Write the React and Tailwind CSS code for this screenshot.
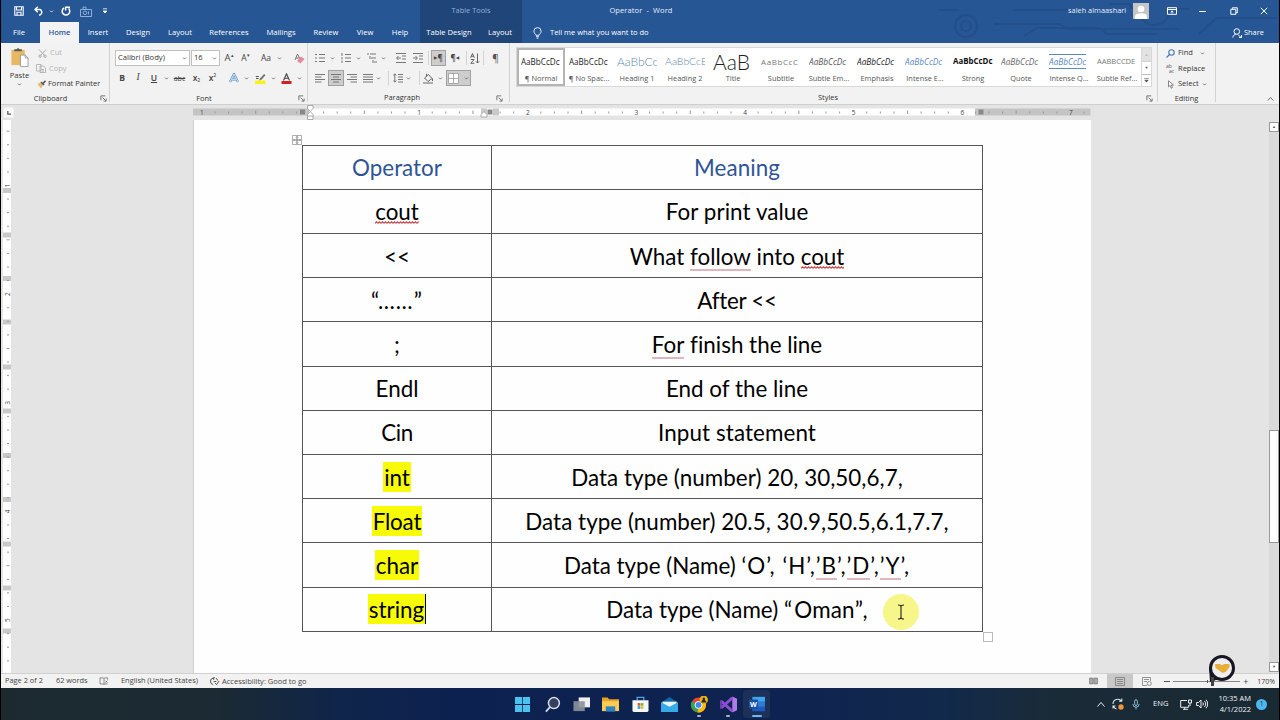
import React from "react";

function Caret({ className = "" }) {
  return (
    <svg viewBox="0 0 6 4" className={"h-[3px] w-[5px] shrink-0 " + className}>
      <path d="M1 .8 3 2.8 5 .8" fill="none" stroke="#555" strokeWidth="1" />
    </svg>
  );
}

function Divider({ className = "" }) {
  return <div className={"w-px shrink-0 bg-[#d2d2d2] " + className} />;
}

function Slot({ w, children, className = "" }) {
  return <div className={"flex shrink-0 items-center justify-center " + w + " " + className}>{children}</div>;
}

function Launcher() {
  return (
    <svg viewBox="0 0 8 8" className="size-[7px]" fill="none" stroke="#666" strokeWidth="1">
      <path d="M1 6V1h5M3 3l3.5 3.5M7 4v3H4" />
    </svg>
  );
}

function TitleBar() {
  return (
    <div className="flex h-[22px] items-center text-[#e6eefa]">
      <div className="flex w-[419px] items-center pl-[13px]">
        <svg viewBox="0 0 10 10" className="size-[10px]" fill="none" stroke="#fff" strokeWidth="1.1">
          <path d="M.8.8h8.4v8.4H.8zM2.500 1v3h5V1M3 9V6.200h4V9" />
        </svg>
        <svg viewBox="0 0 10 10" className="ml-[10px] size-[10px]" fill="none" stroke="#fff" strokeWidth="1.4">
          <path d="M3.800.8 1 3.500l2.800 2.700M1.200 3.500H6a3 3 0 0 1 0 5.500H5" />
        </svg>
        <Caret className="ml-[5px] [&_path]:stroke-white" />
        <svg viewBox="0 0 10 10" className="ml-[7px] size-[10px]" fill="none" stroke="#fff" strokeWidth="1.5">
          <path d="M3 2a3.800 3.800 0 1 0 4.500.4M4.600 4.600V1.200H9" />
        </svg>
        <svg viewBox="0 0 12 11" className="ml-[9px] h-[11px] w-[12px]" fill="none" stroke="#8faed8" strokeWidth="1">
          <path d="M.5 3.500h11v7H.5zM3 3.500V1.200h3v2.300" />
          <circle cx="5" cy="6.800" r="1.800" />
          <path d="M8.500 5.500v3" />
        </svg>
        <svg viewBox="0 0 6 6" className="ml-[10px] size-[6px]">
          <path d="M1 .8h4M1 3l2 2 2-2z" stroke="#fff" strokeWidth=".8" fill="#fff" />
        </svg>
      </div>
      <div className="flex h-full w-[102px] items-center justify-center bg-[#1f4579] text-[7.4px] text-[#93afd6]">Table Tools</div>
      <div className="w-[238px] text-center text-[7.5px] tracking-[0.1px]">Operator&nbsp; -&nbsp; Word</div>
      <div className="relative flex h-full flex-1 items-center">
        <svg viewBox="0 0 340 42" className="absolute top-0 right-0 h-[42px] w-[340px]" fill="none" stroke="#224f8a" strokeWidth="2">
          <circle cx="27" cy="26" r="11" />
          <circle cx="27" cy="26" r="5" />
          <path d="M0 10h20M55 24h65l10 5h110M85 36l13-8h62l8 6h50M170 4h20l14 16c6 7 18 7 24-2l6-9h16M260 34l18-16h60M75 10h90" />
        </svg>
        <div className="relative flex w-full items-center">
          <div className="ml-[308px] text-[7.4px]">saleh almaashari</div>
          <div className="ml-[7px] h-[16px] w-[16px] bg-[#c6c6c6]">
            <svg viewBox="0 0 16 16" className="size-[16px]" fill="#fff">
              <circle cx="8" cy="6" r="3.300" />
              <path d="M2 16v-2.500c0-2 2-3 4-3h4c2 0 4 1 4 3V16z" />
            </svg>
          </div>
          <svg viewBox="0 0 10 8" className="ml-[18px] h-[8px] w-[10px]" fill="none" stroke="#fff" strokeWidth="1">
            <path d="M.5.7h9v6.600h-9zM.5 2.500h9M5 6.500V4M3.600 5 5 3.800 6.400 5" />
          </svg>
          <div className="ml-[22px] h-px w-[7px] bg-white" />
          <svg viewBox="0 0 8 8" className="ml-[24px] size-[8px]" fill="none" stroke="#fff" strokeWidth="1">
            <path d="M.8 2.300h5v5h-5zM2.300 2V.8h5v5H6" />
          </svg>
          <svg viewBox="0 0 8 8" className="ml-[22px] size-[8px]" fill="none" stroke="#fff" strokeWidth="1">
            <path d="m.8.8 6.400 6.400M7.200.8.8 7.200" />
          </svg>
        </div>
      </div>
    </div>
  );
}

function Tab({ w, children, className = "text-white" }) {
  return <div className={"flex h-full shrink-0 items-center justify-center text-[7.6px] " + w + " " + className}>{children}</div>;
}

function TabRow() {
  return (
    <div className="flex h-[21px] items-center">
      <Tab w="w-[36px]">File</Tab>
      <div className="w-[3px]" />
      <Tab w="w-[39px]" className="bg-[#f3f3f3] font-semibold text-[#2b579a]">Home</Tab>
      <Tab w="w-[38px]">Insert</Tab>
      <Tab w="w-[42px]">Design</Tab>
      <Tab w="w-[42px]">Layout</Tab>
      <Tab w="w-[56px]">References</Tab>
      <Tab w="w-[48px]">Mailings</Tab>
      <Tab w="w-[42px]">Review</Tab>
      <Tab w="w-[36px]">View</Tab>
      <Tab w="w-[34px]">Help</Tab>
      <div className="w-[3px]" />
      <Tab w="w-[58px]" className="bg-[#1f4579] text-white">Table Design</Tab>
      <Tab w="w-[44px]" className="bg-[#1f4579] text-white">Layout</Tab>
      <svg viewBox="0 0 10 13" className="ml-[11px] h-[12px] w-[9px]" fill="none" stroke="#fff" strokeWidth="1">
        <path d="M3.200 9C3 7.500 1 6.800 1 4.500a4 4 0 0 1 8 0C9 6.800 7 7.500 6.800 9zM3.400 10.600h3.200M4 12.200h2" />
      </svg>
      <div className="ml-[8px] w-[101px] text-[7.5px] font-medium text-white">Tell me what you want to do</div>
      <svg viewBox="0 0 10 10" className="ml-[581px] size-[10px]" fill="none" stroke="#fff" strokeWidth="1">
        <circle cx="4.800" cy="3.500" r="2.800" />
        <path d="M.8 9.500c.3-2 1.500-3 3-3.200M6 6.500l3 3M9.500 7v2.500H7" />
      </svg>
      <div className="ml-[2px] text-[7.4px] text-white">Share</div>
    </div>
  );
}

function GroupLabel({ children, launcher = true }) {
  return (
    <div className="mt-px flex h-[12px] w-full items-center text-[7.4px] text-[#333]">
      <div className="flex-1 text-center">{children}</div>
      <div className={launcher ? "w-[9px]" : "w-0"}>{launcher && <Launcher />}</div>
    </div>
  );
}

function Clipboard() {
  return (
    <div className="flex w-[108px] flex-col">
      <div className="flex h-[50px]">
        <div className="flex w-[37px] flex-col items-center pt-[4px]">
          <svg viewBox="0 0 19 21" className="h-[20px] w-[19px]">
            <path d="M1 3h14v16H1z" fill="#e8b964" />
            <path d="M4 4.500V2.300h2.500a1.600 1.600 0 0 1 3 0H12v2.200z" fill="#5a5a5a" />
            <path d="M10.500 8.500h5l3 3v9h-8z" fill="#fff" stroke="#8a8a8a" strokeWidth=".8" />
            <path d="M15.500 8.500v3h3" fill="none" stroke="#8a8a8a" strokeWidth=".8" />
          </svg>
          <div className="mt-[3px] text-[7.600px] leading-[10px] text-[#333]">Paste</div>
          <Caret className="mt-[3px]" />
        </div>
        <div className="flex flex-col pt-[2px] text-[7.500px] leading-none text-[#b5b5b5]">
          <div className="flex h-[16px] items-center gap-[3px]">
            <svg viewBox="0 0 9 9" className="size-[9px]" fill="none" stroke="#aaa" strokeWidth="1">
              <path d="M1 .5 6.300 6.200M8 .5 2.700 6.200" />
              <circle cx="2" cy="7.200" r="1.200" />
              <circle cx="7" cy="7.200" r="1.200" />
            </svg>
            Cut
          </div>
          <div className="-ml-[2px] flex h-[15px] items-center gap-[3px]">
            <svg viewBox="0 0 10 9" className="h-[9px] w-[10px]" fill="#f3f3f3" stroke="#b0b0b0" strokeWidth=".9">
              <path d="M.5.5h4.500v6.500H.5zM4 2h3.500l2 2v4.500H4zM5.500 5.500H8M5.500 7H8" />
            </svg>
            Copy
          </div>
          <div className="-ml-px flex h-[16px] items-center gap-[2px] text-[#333]">
            <svg viewBox="0 0 9 9" className="size-[9px]">
              <path d="m.5 4 3-1.500 2.500 2.500L4 8.500z" fill="#e8b964" />
              <path d="m4 2 3 3M6 3.500 8.500.8" stroke="#555" strokeWidth="1.600" />
            </svg>
            Format Painter
          </div>
        </div>
      </div>
      <GroupLabel>Clipboard</GroupLabel>
    </div>
  );
}

function FontGroup() {
  return (
    <div className="flex w-[197px] flex-col">
      <div className="flex h-[50px] flex-col pt-[6px] text-[#444]">
        <div className="flex h-[18px] items-center pl-[5px]">
          <div className="flex h-[16px] w-[75px] items-center justify-between border border-[#c0c0c0] bg-white pr-[2px] pl-[2px] text-[7.600px] text-[#333]">
            Calibri (Body)
            <Caret />
          </div>
          <div className="ml-[1px] flex h-[16px] w-[29px] items-center justify-between border border-[#c0c0c0] bg-white pr-[2px] pl-[2px] text-[7.600px] text-[#333]">
            16
            <Caret />
          </div>
          <Slot w="w-[18px]" className="text-[9.500px]">A<span className="mb-[6px] text-[5px]">▴</span></Slot>
          <Slot w="w-[15px]" className="text-[8.500px]">A<span className="mb-[6px] text-[5px]">▾</span></Slot>
          <Slot w="w-[22px]" className="pl-[4px] text-[8.500px]">Aa</Slot>
          <Caret className="ml-[2px]" />
          <svg viewBox="0 0 11 11" className="ml-[12px] size-[11px]">
            <path d="M1 7 3.500 1 6 6M2 5h3" stroke="#777" fill="none" />
            <path d="m3 8 4-4.500 3.500 2.500-4 4.500z" fill="#e58a9c" />
          </svg>
        </div>
        <div className="mt-[2px] flex h-[18px] items-center pl-[4px] text-[8.500px]">
          <Slot w="w-[16px]" className="font-bold">B</Slot>
          <Slot w="w-[16px]" className="font-['Liberation_Serif'] text-[9.500px] italic">I</Slot>
          <Slot w="w-[16px]" className="font-semibold underline">U</Slot>
          <Slot w="w-[8px]"><Caret /></Slot>
          <Slot w="w-[19px]" className="text-[7px] line-through">abc</Slot>
          <Slot w="w-[15px]" className="font-semibold">x<span className="mt-[5px] text-[4.500px]">2</span></Slot>
          <Slot w="w-[17px]" className="font-semibold">x<span className="mb-[5px] text-[4.500px]">2</span></Slot>
          <Slot w="w-[25px]">
            <svg viewBox="0 0 10 10" className="size-[10px]" fill="none">
              <path d="M1 9 5 1l4 8M2.800 6.300h4.400" stroke="#5b8fca" strokeWidth="2.200" />
              <path d="M1 9 5 1l4 8M2.800 6.300h4.400" stroke="#e8f0fa" strokeWidth=".9" />
            </svg>
          </Slot>
          <Caret className="-ml-[2px]" />
          <Slot w="w-[23px]">
            <svg viewBox="0 0 11 11" className="size-[11px]">
              <path d="M0 7.500h10.500v3.500H0z" fill="#f8f41a" />
              <path d="m4 7.500 1-2L9 1l1.500 1.300-4 4.500z" fill="#777" />
              <path d="M.8 3.500h3M1 5.500h2.500" stroke="#555" />
            </svg>
          </Slot>
          <Caret className="-ml-px" />
          <Slot w="w-[21px]">
            <svg viewBox="0 0 11 11" className="size-[11px]">
              <path d="M2.500 7.500 5.500.8l3 6.700M3.500 5.300h4" stroke="#444" strokeWidth="1.100" fill="none" />
              <path d="M.5 8h10v3H.5z" fill="#d32020" />
            </svg>
          </Slot>
          <Caret />
        </div>
      </div>
      <GroupLabel>Font</GroupLabel>
    </div>
  );
}

function Lines({ d, className = "" }) {
  return (
    <svg viewBox="0 0 10 10" className={"size-[10px] shrink-0 " + className} fill="none" stroke="#777" strokeWidth="1">
      <path d={d} />
    </svg>
  );
}

function ParagraphGroup() {
  return (
    <div className="flex w-[201px] flex-col">
      <div className="flex h-[50px] flex-col pt-[6px]">
        <div className="flex h-[18px] items-center pl-[7px]">
          <Lines d="M0 1.500h2M0 5h2M0 8.500h2M4 1.500h6M4 5h6M4 8.500h6" />
          <Caret className="ml-[5px]" />
          <Lines className="ml-[6px]" d="M1 0v3M1 4v2.500M1 7.500v2.500M4 1.500h6M4 5h6M4 8.500h6" />
          <Caret className="ml-[5px]" />
          <Lines className="ml-[6px]" d="M0 1h2M3 1h6M3 3v3M4 5h5M6 7v3M7 9h3" />
          <Caret className="ml-[4px]" />
          <Lines className="ml-[10px]" d="M0 .5h10M6 3h4M6 6h4M0 9.500h10M5 5H.8M2.500 3 .6 5l1.900 2" />
          <Lines className="ml-[7px]" d="M0 .5h10M6 3h4M6 6h4M0 9.500h10M0 5h4.200M2.500 3l1.900 2-1.900 2" />
          <Divider className="ml-[5px] h-[14px]" />
          <div className="ml-[2px] flex h-[16px] w-[15px] items-center justify-center border border-[#a0a0a0] bg-[#cdcdcd] text-[8px] leading-none font-semibold text-[#444]">
            <span className="text-[4px]">▶</span>¶
          </div>
          <Slot w="w-[17px]" className="text-[8px] font-semibold text-[#444]">¶<span className="text-[4px]">◀</span></Slot>
          <Divider className="ml-[3px] h-[14px]" />
          <Slot w="w-[16px]">
            <svg viewBox="0 0 10 11" className="h-[11px] w-[10px]" fill="none" stroke="#555" strokeWidth=".9">
              <path d="M.6 4.800 2.500.5l1.900 4.300M1.200 3.300h2.600M.8 6.500h3.300L.8 10.300h3.500M7.500.5v9.500M5.800 8.300 7.500 10l1.700-1.700" />
            </svg>
          </Slot>
          <Divider className="h-[14px]" />
          <Slot w="w-[23px]" className="text-[10px] text-[#555]">¶</Slot>
        </div>
        <div className="mt-[2px] flex h-[18px] items-center pl-[7px]">
          <Lines d="M0 1.500h10M0 4h6.500M0 6.500h10M0 9h6.500" />
          <div className="ml-[3px] flex h-[16px] w-[16px] items-center justify-center border border-[#a0a0a0] bg-[#cdcdcd]">
            <Lines d="M0 1.500h10M2 4h6M0 6.500h10M2 9h6" />
          </div>
          <Lines className="ml-[3px]" d="M0 1.500h10M3.500 4H10M0 6.500h10M3.500 9H10" />
          <Lines className="ml-[6px]" d="M0 1.500h10M0 4h10M0 6.500h10M0 9h10" />
          <Caret className="ml-[3px]" />
          <Divider className="ml-[7px] h-[14px]" />
          <Lines className="ml-[4px]" d="M1.800 1v8M.3 2.500 1.800.8l1.500 1.700M.3 7.500l1.500 1.700 1.500-1.700M5 1.500h5M5 4h5M5 6.500h5M5 9h5" />
          <Caret className="ml-[3px]" />
          <Divider className="ml-[8px] h-[14px]" />
          <svg viewBox="0 0 11 11" className="ml-[3px] size-[11px]" fill="none" stroke="#666" strokeWidth="1">
            <path d="m1.500 5 4-3.500 3.500 4-4 3-3.500-3.500zM3.500 3.500V.8M9.500 5.500v2.500M0 10h10" />
          </svg>
          <Caret className="ml-[4px]" />
          <div className="ml-[3px] flex h-[16px] w-[25px] items-center gap-[5px] border border-[#a0a0a0] bg-[#cdcdcd] pl-[1px]">
            <svg viewBox="0 0 11 11" className="size-[11px]" fill="#fff" stroke="#999" strokeWidth=".8">
              <path d="M.5.5h10v10H.5zM5.500.5v10M.5 5.500h10" />
            </svg>
            <Caret />
          </div>
        </div>
      </div>
      <div className="pr-[4px]">
        <GroupLabel>Paragraph</GroupLabel>
      </div>
    </div>
  );
}

const STYLES = [
  ["AaBbCcDc", "¶ Normal", "text-[8.100px] text-[#222]", "outline outline-2 -outline-offset-2 outline-[#b4b4b4]"],
  ["AaBbCcDc", "¶ No Spac...", "text-[8.100px] text-[#222]", ""],
  ["AaBbCc", "Heading 1", "text-[12px] text-[#6488a8] font-['Lato'] font-light", ""],
  ["AaBbCcE", "Heading 2", "text-[10.500px] text-[#6488a8] font-['Lato'] font-light", ""],
  ["AaB", "Title", "text-[21px] text-[#222] font-['Lato'] font-light", ""],
  ["AaBbCcC", "Subtitle", "text-[8px] text-[#777] tracking-[0.600px]", ""],
  ["AaBbCcDc", "Subtle Em...", "text-[8.300px] text-[#555] italic", ""],
  ["AaBbCcDc", "Emphasis", "text-[8.300px] text-[#222] italic", ""],
  ["AaBbCcDc", "Intense E...", "text-[8.300px] text-[#5b8ac0] italic", ""],
  ["AaBbCcDc", "Strong", "text-[7.900px] text-[#111] font-bold", ""],
  ["AaBbCcDc", "Quote", "text-[8.300px] text-[#666] italic", ""],
  ["AaBbCcDc", "Intense Q...", "text-[8.300px] text-[#5b8ac0] italic border-y border-[#5b8ac0]", ""],
  ["AABBCCDE", "Subtle Ref...", "text-[7.500px] text-[#777]", ""],
];

function StylesGroup() {
  return (
    <div className="flex w-[647px] flex-col">
      <div className="flex h-[50px] pt-[4px] pl-[6px]">
        <div className="flex h-[40px] w-[636px] border border-[#d8d8d8] bg-white">
          {STYLES.map(([sample, name, cls, box], i) => (
            <div key={i} className={"flex h-[38px] w-[48px] shrink-0 flex-col items-center " + box}>
              <div className="flex h-[25px] w-[40px] items-center justify-start overflow-hidden pt-[2px]">
                <span className={"leading-[13px] whitespace-nowrap " + cls}>{sample}</span>
              </div>
              <div className="text-[7.400px] leading-[11px] whitespace-nowrap text-[#555]">{name}</div>
            </div>
          ))}
          <div className="flex flex-1 flex-col border-l border-[#d8d8d8]">
            <div className="flex h-[13px] items-center justify-center bg-[#e2e2e2] text-[4px] text-[#bbb]">▲</div>
            <div className="flex h-[13px] items-center justify-center border-t border-[#d0d0d0] text-[4px] text-[#555]">▼</div>
            <div className="flex flex-1 items-center justify-center border-t border-[#c0c0c0]">
              <svg viewBox="0 0 6 6" className="size-[5px]"><path d="M0 .5h6M1 2.500h4L3 5z" stroke="#555" fill="#555" strokeWidth=".7" /></svg>
            </div>
          </div>
        </div>
      </div>
      <div className="pr-[2px]">
        <GroupLabel>Styles</GroupLabel>
      </div>
    </div>
  );
}

function EditingGroup() {
  return (
    <div className="flex w-[57px] flex-col">
      <div className="flex h-[50px] flex-col pt-[2px] pl-[8px] text-[7.500px] leading-none text-[#333]">
        <div className="flex h-[16px] items-center">
          <svg viewBox="0 0 9 9" className="size-[9px]" fill="none" stroke="#4a7ab5" strokeWidth="1.100">
            <circle cx="5.500" cy="3.500" r="2.700" />
            <path d="M3.500 5.500.6 8.500" />
          </svg>
          <span className="ml-[3px]">Find</span>
          <Caret className="ml-[7px]" />
        </div>
        <div className="flex h-[15px] items-center">
          <div className="flex w-[10px] flex-col text-[5px] leading-[4.500px] text-[#555]">
            <span>ab</span>
            <span className="pl-[3px]">ac</span>
          </div>
          <span className="ml-[2px]">Replace</span>
        </div>
        <div className="flex h-[16px] items-center">
          <svg viewBox="0 0 9 9" className="size-[9px]" fill="#fff" stroke="#777" strokeWidth=".9">
            <path d="M2.500.8v6l1.600-1.400 1.200 2.800 1.200-.6-1.200-2.600h2.200z" />
          </svg>
          <span className="ml-[3px]">Select</span>
          <Caret className="ml-[3px]" />
        </div>
      </div>
      <GroupLabel launcher={false}>Editing</GroupLabel>
    </div>
  );
}

function Ribbon() {
  return (
    <div className="flex h-[62px] border-b border-[#cfcfcf] bg-[#f2f2f2]">
      <Clipboard />
      <Divider className="h-[59px]" />
      <FontGroup />
      <Divider className="h-[59px]" />
      <ParagraphGroup />
      <Divider className="h-[59px]" />
      <StylesGroup />
      <Divider className="h-[59px]" />
      <EditingGroup />
      <Divider className="h-[59px]" />
      <div className="flex flex-1 items-end justify-end pr-[5px] pb-[3px]">
        <svg viewBox="0 0 8 5" className="h-[4px] w-[7px]" fill="none" stroke="#555"><path d="m.5 4.500 3.500-4 3.500 4" /></svg>
      </div>
    </div>
  );
}

const STEP = 13.58;

function HorizontalRuler() {
  const ticks = [];
  for (let i = -8; i < 58; i++) {
    if (i % 8 === 0) continue;
    ticks.push(<path key={i} d={`M${117 + i * STEP} ${i % 4 === 0 ? 5.500 : 6.500}v${i % 4 === 0 ? 3.500 : 2}`} stroke="#999" strokeWidth="1" />);
  }
  return (
    <svg viewBox="0 0 898 15" className="ml-[192px] h-[15px] w-[898px]">
      <path d="M0 3.500h116v7H0zM782 3.500h115.500v7H782z" fill="#c4c4c4" />
      <path d="M116 3.500h666v7H116z" fill="#fff" />
      {ticks}
      <path d="M300 3.500h6v7h-6zM288 3.500h6v7h-6z" fill="#c9c9c9" />
      <path d="M107 4.500h5v5h-5zM294.500 4.500h5v5h-5zM785.500 4.500h5v5h-5z" fill="#888" />
      {[1, 0, 1, 2, 3, 4, 5, 6, 7].map((n, i) =>
        n ? (
          <text key={i} x={117.500 + (i - 1) * STEP * 8} y="9.500" fontSize="6.500" textAnchor="middle" fill="#444">{n}</text>
        ) : null
      )}
      <path d="M114.500.5h5.500v3l-2.700 3-2.800-3zM117.300 6.500l2.700 3v5h-5.500v-5zM114.500 11h5.500M288 11v-1.500l3-3 3 3v2.500h-6z" fill="#fff" stroke="#999" strokeWidth=".8" />
    </svg>
  );
}

const ROW_MARKS = [70.5, 115, 158.5, 202, 247, 291, 335.5, 379.5, 424, 468, 511];

function VerticalRuler() {
  const ticks = [];
  for (let i = -7; i < 36; i++) {
    if (i % 8 === 0) continue;
    const y = 65.500 + i * STEP;
    if (y < 4) continue;
    ticks.push(<path key={i} d={`M${i % 4 === 0 ? 3.500 : 4} ${y}h${i % 4 === 0 ? 3 : 2}`} stroke="#999" strokeWidth="1" />);
  }
  return (
    <svg viewBox="0 0 8 553" className="ml-[2px] h-[553px] w-[8px] shrink-0 bg-white">
      {ROW_MARKS.map((y) => (
        <path key={y} d={`M0 ${y - 2.500}h8v5h-8z`} fill="#c8c8c8" />
      ))}
      {ticks}
      {[1, 2, 3, 4, 5].map((n, i) => (
        <text key={n} fontSize="6.500" textAnchor="middle" fill="#444" transform={`translate(7 ${65.500 + i * STEP * 8}) rotate(-90)`}>{n}</text>
      ))}
    </svg>
  );
}

function Spelling({ children }) {
  return (
    <span className="relative inline-block">
      {children}
      <svg className="absolute top-[24px] left-0 h-[3px] w-full overflow-hidden">
        <defs>
          <pattern id="wave" width="3" height="3" patternUnits="userSpaceOnUse">
            <path d="M0 2.200 1.500.8 3 2.200" fill="none" stroke="#c93a3f" strokeWidth="1.200" />
          </pattern>
        </defs>
        <rect width="100%" height="3" fill="url(#wave)" />
      </svg>
    </span>
  );
}

function Grammar({ children }) {
  return (
    <span className="relative inline-block">
      {children}
      <span className="absolute top-[27px] left-0 h-[2px] w-full bg-[#e0b6be]" />
    </span>
  );
}

function Mark({ children, caret = false }) {
  return (
    <span className={"mb-[2px] inline-block h-[30px] bg-[#f7fb08] px-[1px] leading-[32px]" + (caret ? " border-r border-black" : "")}>{children}</span>
  );
}

const ROWS = [
  ["Operator", "Meaning", "", "tracking-[0.100px]"],
  [<Spelling>cout</Spelling>, "For print value", "", "tracking-[0.080px]"],
  ["<<", <>What <Grammar>follow</Grammar> into <Spelling>cout</Spelling></>, "", ""],
  ["“……”", <>After &lt;&lt;</>, "tracking-[1.100px]", "tracking-[-0.300px]"],
  [";", <><Grammar>For</Grammar> finish the line</>, "", ""],
  ["Endl", "End of the line", "", ""],
  ["Cin", "Input statement", "tracking-[-0.400px]", "tracking-[0.100px]"],
  [<Mark>int</Mark>, "Data type (number) 20, 30,50,6,7,", "", "tracking-[0.040px]"],
  [<Mark>Float</Mark>, "Data type (number) 20.5, 30.9,50.5,6.1,7.7,", "tracking-[-0.200px]", "tracking-[0.040px]"],
  [<Mark>char</Mark>, <>Data type (Name) <span className="tracking-[1px]">‘O’, ‘H’,<Grammar>’B</Grammar>’,<Grammar>’D</Grammar>’,<Grammar>’Y</Grammar>’,</span></>, "", ""],
  [<Mark caret>string</Mark>, <>Data type (Name) <span className="tracking-[2.200px]">“</span><span className="tracking-[0.200px]">Oman</span><span className="tracking-[2px]">”,</span></>, "", "pl-[2px]"],
];

function OperatorTable() {
  return (
    <div className="relative w-[681px] border-t border-l border-[#555] font-['Lato','Carlito',sans-serif] text-[22.400px] leading-[30px] font-normal text-black [font-variant-ligatures:none]">
      <svg viewBox="0 0 10 10" className="absolute -top-[11px] -left-[11px] size-[10px]" fill="#fff" stroke="#666" strokeWidth=".8">
        <path d="M.5.5h9v9h-9z" stroke="#999" />
        <path d="M5 1.500v7M1.500 5h7M4 2.500l1-1 1 1M4 7.500l1 1 1-1M2.500 4l-1 1 1 1M7.500 4l1 1-1 1" fill="none" />
      </svg>
      {ROWS.map(([a, b, ca, cb], i) => (
        <div key={i} className={"flex h-[44.200px] border-b border-[#555]" + (i === 0 ? " text-[#2f5496]" : "")}>
          <div className={"flex w-[189px] items-center justify-center border-r border-[#555] pt-[2px] " + ca}>{a}</div>
          <div className="flex w-[491px] items-center justify-center border-r border-[#555] pt-[2px] whitespace-pre">
            <div className={cb}>{b}</div>
          </div>
        </div>
      ))}
      <div className="absolute -right-[10px] -bottom-[10px] size-[10px] border border-[#bbb] bg-white" />
      <div className="absolute right-[64px] bottom-[2px] flex size-[36px] items-center justify-center rounded-full bg-[#f7f68a]">
        <svg viewBox="0 0 8 16" className="h-[16px] w-[8px]" fill="none" stroke="#222" strokeWidth="1.100">
          <path d="M1 1c2 0 3 .3 3 1.500V13.500C4 14.700 3 15 1 15M7 1c-2 0-3 .3-3 1.500M4 13.500C4 14.700 5 15 7 15" />
        </svg>
      </div>
    </div>
  );
}

function Document() {
  return (
    <div className="flex h-[568px] flex-col bg-[#e4e4e4]">
      <div className="flex h-[15px] items-start">
        <div className="relative w-0">
          <div className="absolute top-[2px] left-[2px] flex size-[11px] items-center justify-center border border-[#eee] bg-[#fafafa]">
            <svg viewBox="0 0 5 5" className="size-[4px]" fill="none" stroke="#555" strokeWidth="1.500"><path d="M1 0v4h4" /></svg>
          </div>
        </div>
        <HorizontalRuler />
      </div>
      <div className="flex h-[553px]">
        <VerticalRuler />
        <div className="ml-[182px] h-[553px] w-[898px] border-l border-[#d0d0d0] bg-[#fefefe] pt-[24.700px] pl-[108px]">
          <OperatorTable />
        </div>
        <div className="flex-1" />
        <div className="flex w-[10px] flex-col pt-[2px]">
          <div className="flex h-[10px] items-center justify-center border border-[#999] bg-white text-[4px] text-[#555]">▲</div>
          <div className="h-[298px] bg-[#d9d9d9]" />
          <div className="h-[113px] border border-[#999] bg-white" />
          <div className="h-[119px] bg-[#d9d9d9]" />
          <div className="flex h-[10px] items-center justify-center border border-[#999] bg-white text-[4px] text-[#555]">▼</div>
        </div>
      </div>
    </div>
  );
}

function StatusBar() {
  return (
    <div className="flex h-[15px] items-center border-t border-[#d0d0d0] bg-[#f2f2f2] text-[7.400px] text-[#444]">
      <div className="ml-[4px] w-[51px]">Page 2 of 2</div>
      <div className="w-[43px]">62 words</div>
      <svg viewBox="0 0 10 9" className="h-[8px] w-[10px]" fill="none" stroke="#666" strokeWidth=".8">
        <path d="M.5 1h3.500l1 .8V8.500L4 7.800H.5zM5 1.800 6 1h3v2M5 8.500l1-.7h3M6.500 4l2.500 2.500M9 4 6.500 6.500" />
      </svg>
      <div className="ml-[12px] w-[88px] whitespace-nowrap">English (United States)</div>
      <svg viewBox="0 0 11 10" className="h-[9px] w-[11px]" fill="none" stroke="#444" strokeWidth="1">
        <path d="M4.500 1A3.800 3.800 0 0 0 4 8.500M6 .8l-2 .4.800 2M6 6.500l1.800 2L10.500 4.500M7 1.500a3 3 0 0 1 2 2.500M4.500 5h3" />
      </svg>
      <div className="ml-[2px] pt-px text-[7.500px]">Accessibility: Good to go</div>
      <div className="flex-1" />
      <svg viewBox="0 0 10 8" className="h-[8px] w-[9px]" fill="#aaa" stroke="#777" strokeWidth=".8">
        <path d="M.5.8h4v6.400h-4zM5.500.8h4v6.400h-4z" />
      </svg>
      <div className="ml-[9px] flex h-[14px] w-[26px] items-center justify-center bg-[#c8c8c8]">
        <svg viewBox="0 0 10 9" className="h-[9px] w-[10px]" fill="none" stroke="#777" strokeWidth=".8">
          <path d="M.5.5h9v8h-9zM2 2.500h6M2 4.500h6M2 6.500h6" />
        </svg>
      </div>
      <svg viewBox="0 0 10 9" className="ml-[9px] h-[9px] w-[10px]" fill="none" stroke="#888" strokeWidth=".9">
        <path d="M5 8.500H.5v-8h8V4M2 2.500h5M2 4.500h3" />
        <circle cx="7.300" cy="6.500" r="2" />
      </svg>
      <div className="ml-[12px] h-px w-[6px] bg-[#555]" />
      <div className="relative ml-[3px] flex h-[14px] w-[67px] items-center">
        <div className="h-px w-full bg-[#888]" />
        <div className="absolute top-[6px] left-[34px] h-[3px] w-px bg-[#555]" />
        <svg viewBox="0 0 28 30" className="absolute -top-[20px] left-[35px] h-[30px] w-[28px]">
          <path d="M1 13h5v11h8v2H7.500l-3 2H2z" fill="#171722" />
          <circle cx="14" cy="14" r="13" fill="#171722" />
          <circle cx="14" cy="14" r="10" fill="#eeeef2" />
          <path d="M7 10h4.500l2.500 1.200 2.200-1.200h5.300v3l-3 4c-1.500 2-4.500 2.300-6 .5L7.500 14z" fill="#e9ae35" />
        </svg>
        <div className="absolute top-[3px] left-[38px] h-[9px] w-[3px] bg-[#444]" />
      </div>
      <div className="ml-[3px] w-[10px] text-[9px] leading-none">+</div>
      <div className="ml-[4px] mr-[4px] text-[7px]">170%</div>
    </div>
  );
}

function TaskIcon({ children, dot = false }) {
  return (
    <div className="relative flex h-full w-[29.400px] items-center justify-center">
      <svg viewBox="0 0 18 18" className="size-[17px]">{children}</svg>
      {dot && <div className="absolute bottom-[3px] h-[2px] w-[4px] rounded-full bg-[#a9b5c6]" />}
    </div>
  );
}

function Taskbar() {
  return (
    <div className="flex h-[32px] items-center bg-[linear-gradient(90deg,#1c2a30_0%,#1b2a33_17%,#0f2549_26%,#0d2150_35%,#0f2350_62%,#11294a_74%,#1a2b38_82%,#1a2a33_100%)]">
      <div className="w-[507px]" />
      <TaskIcon>
        <path d="M1 1h7.600v7.600H1zM9.400 1H17v7.600H9.400zM1 9.400h7.600V17H1zM9.400 9.400H17V17H9.400z" fill="#4cc2f1" />
      </TaskIcon>
      <TaskIcon>
        <circle cx="10.500" cy="7.500" r="5.800" fill="#33415f" stroke="#d5dce8" strokeWidth="1.600" />
        <path d="m6.500 11.500-4.500 5" stroke="#d5dce8" strokeWidth="1.800" />
      </TaskIcon>
      <TaskIcon>
        <path d="M6 1.500h12v10.500H6z" fill="#f0f0f0" />
        <path d="M.5 5.500h12V16H.5z" fill="#8d929b" opacity=".9" />
      </TaskIcon>
      <TaskIcon>
        <path d="M0 1.500h6l1.500 2H18V16H0z" fill="#e8a325" />
        <path d="M0 5.500h18V16H0z" fill="#fbcb53" />
        <path d="M4 11h10v5.500H4z" fill="#2c83c4" />
      </TaskIcon>
      <TaskIcon>
        <path d="M5.500 4.500V1.500h7v3" fill="none" stroke="#4ba3dd" strokeWidth="1.400" />
        <path d="M.5 4.500h17V15a2 2 0 0 1-2 2h-13a2 2 0 0 1-2-2z" fill="#f4f6f8" />
        <path d="M6 7.500h2.800v2.800H6z" fill="#e0532c" />
        <path d="M9.300 7.500h2.800v2.800H9.300z" fill="#7db530" />
        <path d="M6 10.800h2.800v2.800H6z" fill="#2f9be0" />
        <path d="M9.300 10.800h2.800v2.800H9.300z" fill="#f4b62a" />
      </TaskIcon>
      <TaskIcon>
        <path d="M0 7 9 1l9 6v10H0z" fill="#1465a8" />
        <path d="M1.500 6h15v7h-15z" fill="#e9f4fc" />
        <path d="M0 6.500l9 5 9-5V17H0z" fill="#36a9e8" />
      </TaskIcon>
      <TaskIcon dot>
        <circle cx="8" cy="9.500" r="8" fill="#e94335" />
        <path d="M8 9.500 1 5.500A8 8 0 0 0 7 17.400z" fill="#34a353" />
        <path d="M8 9.500 7 17.500A8 8 0 0 0 15.500 7z" fill="#fbbc05" />
        <circle cx="8" cy="9.500" r="3.700" fill="#4285f4" stroke="#fff" strokeWidth="1" />
        <circle cx="13.500" cy="4" r="4.500" fill="#e3b21d" />
        <path d="M11 7V5.500l1.300-1V2.800a1.200 1.200 0 0 1 2.500 0v1.700l1.200 1V7z" fill="#33251a" />
      </TaskIcon>
      <TaskIcon dot>
        <path d="M13 .5 18 3v12l-5 2.500z" fill="#b07be8" />
        <path d="M1.500 5.500 13 16M1.500 12.500 13 2" stroke="#8a4fd0" strokeWidth="3" fill="none" />
        <path d="M1 4.500v9" stroke="#7a3fc0" strokeWidth="1.800" />
      </TaskIcon>
      <div className="relative flex h-[28px] w-[27px] items-center justify-center rounded-sm bg-[#1d3158]">
        <svg viewBox="0 0 18 18" className="size-[16px]">
          <path d="M4 1h14v16H4z" fill="#2b7cd3" />
          <path d="M4 1h14v5H4z" fill="#41a5ee" />
          <path d="M4 12h14v5H4z" fill="#185abd" />
          <path d="M0 4h10v10H0z" fill="#174ea6" />
          <text x="5" y="12" fontSize="8" fontWeight="700" fill="#fff" textAnchor="middle">W</text>
        </svg>
        <div className="absolute bottom-[1px] h-[2px] w-[10px] rounded-full bg-[#6fb9ee]" />
      </div>
      <div className="flex-1" />
      <div className="flex items-center text-[#eef2f5]">
        <svg viewBox="0 0 8 5" className="h-[5px] w-[8px]" fill="none" stroke="#eee"><path d="m.5 4.500 3.500-4 3.500 4" /></svg>
        <svg viewBox="0 0 12 12" className="ml-[7px] size-[12px]" fill="none" stroke="#dfe5ea" strokeWidth="1.100">
          <path d="M1 6a4.800 4.800 0 0 1 8.500-3M9.800.5V3.200H7M1 10.500V8h2.500M1.500 8.500a5 5 0 0 0 3 2.500" />
          <circle cx="9" cy="9" r="2.700" fill="#f0953a" stroke="none" />
        </svg>
        <svg viewBox="0 0 9 12" className="ml-[8px] h-[11px] w-[8px]" fill="none" stroke="#8ecbe8" strokeWidth="1">
          <rect x="3" y=".6" width="3" height="6.500" rx="1.500" />
          <path d="M1 5.500a3.500 3.500 0 0 0 7 0M4.500 9v2.500" />
        </svg>
        <div className="ml-[13px] text-[7.600px]">ENG</div>
        <svg viewBox="0 0 12 11" className="ml-[12px] h-[11px] w-[12px]" fill="none" stroke="#eee" strokeWidth="1">
          <path d="M7 1.500H.7v6.800h8V6M3 10.300h5M4.700 8.500v1.800M8.500 1h3v3h-3zM10 4v3" />
        </svg>
        <svg viewBox="0 0 12 10" className="ml-[4px] h-[10px] w-[12px]" fill="none" stroke="#eee" strokeWidth="1">
          <path d="M.6 3.500H2.500L5 1v8L2.500 6.500H.6zM6.800 3.500a2.200 2.200 0 0 1 0 3M8.400 2a4.200 4.200 0 0 1 0 6M10 .8a6 6 0 0 1 0 8.400" />
        </svg>
        <div className="ml-[10px] text-right text-[7.500px] leading-[11px]">
          <div>10:35 AM</div>
          <div>4/1/2022</div>
        </div>
        <div className="ml-[5px] mr-[12px] flex size-[11px] items-center justify-center rounded-full bg-[#4cb8ee] text-[6.500px] text-[#12303f]">1</div>
      </div>
    </div>
  );
}

export default function App() {
  return (
    <div className="h-[720px] w-[1280px] overflow-hidden bg-black px-px font-['Open_Sans','Noto_Sans',sans-serif] leading-none font-medium whitespace-nowrap">
      <div className="flex h-full w-[1278px] flex-col">
        <div className="bg-[#275694]">
          <TitleBar />
          <TabRow />
        </div>
        <Ribbon />
        <Document />
        <StatusBar />
        <Taskbar />
      </div>
    </div>
  );
}
